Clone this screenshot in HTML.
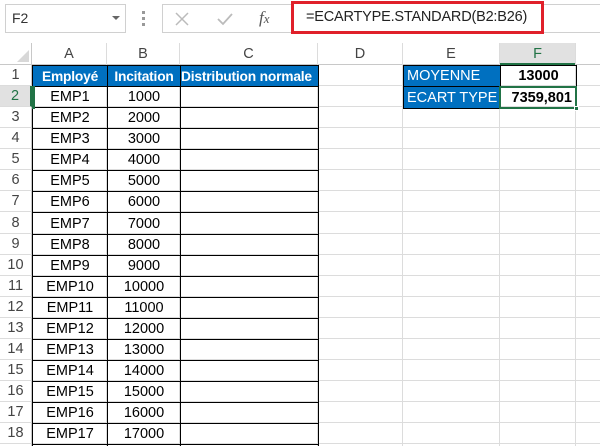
<!DOCTYPE html>
<html style="overflow:hidden;height:446px"><head><meta charset="utf-8"><style>
body{margin:0;width:600px;height:446px;overflow:hidden;background:#fff;font-family:"Liberation Sans",sans-serif;position:relative}
.a{position:absolute;box-sizing:border-box}
.c{position:absolute;box-sizing:border-box;text-align:center;font-size:14.5px;color:#000;display:flex;align-items:center;justify-content:center;white-space:nowrap;overflow:hidden}
.hb{font-size:13.8px!important;letter-spacing:-0.2px}
</style></head><body>
<div class="a" style="left:0;top:0;width:600px;height:37px;background:#fff"></div>
<div class="a" style="left:5px;top:4px;width:121px;height:29px;border:1px solid #d0d0d0"></div>
<div class="a" style="left:12px;top:10px;font-size:14px;color:#333">F2</div>
<div class="a" style="left:112px;top:16px;width:0;height:0;border-left:4px solid transparent;border-right:4px solid transparent;border-top:4px solid #666"></div>
<div class="a" style="left:142px;top:11px;width:3px;height:3px;background:#999"></div>
<div class="a" style="left:142px;top:17px;width:3px;height:3px;background:#999"></div>
<div class="a" style="left:142px;top:23px;width:3px;height:3px;background:#999"></div>
<div class="a" style="left:162px;top:4px;width:440px;height:29px;border:1px solid #d0d0d0"></div>
<svg class="a" style="left:174px;top:11px" width="16" height="16"><path d="M2 2L14 14M14 2L2 14" stroke="#bbb" stroke-width="1.5"/></svg>
<svg class="a" style="left:216px;top:11px" width="18" height="16"><path d="M2 8L7 13L16 3" stroke="#bbb" stroke-width="1.8" fill="none"/></svg>
<div class="a" style="left:259px;top:8px;font-family:'Liberation Serif',serif;font-style:italic;font-size:17px;color:#555">f<span style="font-size:13px">x</span></div>
<div class="a" style="left:291px;top:1px;width:253px;height:33px;border:3px solid #e0202a;background:#fff"></div>
<div class="a" style="left:306px;top:9px;font-size:14.5px;letter-spacing:-0.2px;color:#222">=ECARTYPE.STANDARD(B2:B26)</div>
<div class="a" style="left:0;top:43px;width:600px;height:22px;background:#fff;border-bottom:1px solid #c8c8c8"></div>
<div class="a" style="left:0;top:43px;width:32px;height:403px;border-right:1px solid #c8c8c8"></div>
<svg class="a" style="left:16px;top:49px" width="14" height="14"><path d="M13 1L13 13L1 13Z" fill="#d8d8d8"/></svg>
<div class="a" style="left:500px;top:43px;width:76px;height:22px;background:#e1e1e1;border-bottom:2px solid #217346"></div>
<div class="c" style="left:32px;top:43px;width:75px;height:22px;color:#444;border-right:1px solid #dcdcdc">A</div>
<div class="c" style="left:107px;top:43px;width:73px;height:22px;color:#444;border-right:1px solid #dcdcdc">B</div>
<div class="c" style="left:180px;top:43px;width:138px;height:22px;color:#444;border-right:1px solid #dcdcdc">C</div>
<div class="c" style="left:318px;top:43px;width:85px;height:22px;color:#444;border-right:1px solid #dcdcdc">D</div>
<div class="c" style="left:403px;top:43px;width:97px;height:22px;color:#444;border-right:1px solid #dcdcdc">E</div>
<div class="c" style="left:500px;top:43px;width:76px;height:22px;color:#217346;border-right:1px solid #dcdcdc">F</div>
<div id="g"></div>
<script>
var h='';var top0=65,rh=21.07;
var cols=[32,107,180,318,403,500,576,650];
for(var n=1;n<=19;n++){var t=top0+(n-1)*rh;
 h+='<div class="a" style="left:32px;top:'+(t+rh-1)+'px;width:568px;height:1px;background:#dcdcdc"></div>';
 var bg=n==2?'#e1e1e1':'#fff';var col=n==2?'#217346':'#444';
 h+='<div class="c" style="left:0;top:'+t+'px;width:32px;height:'+rh+'px;background:'+bg+';color:'+col+';border-bottom:1px solid #dcdcdc;'+(n==2?'border-right:2px solid #217346;':'border-right:1px solid #c8c8c8;')+'">'+n+'</div>';}
for(var i=1;i<cols.length;i++)h+='<div class="a" style="left:'+(cols[i]-1)+'px;top:65px;width:1px;height:381px;background:#dcdcdc"></div>';
var B='border:1px solid #000;';
h+='<div class="c hb" style="left:32px;top:65px;width:76px;height:22px;background:#0070c0;color:#fff;font-weight:bold;'+B+'">Employé</div>';
h+='<div class="c hb" style="left:107px;top:65px;width:74px;height:22px;background:#0070c0;color:#fff;font-weight:bold;'+B+'">Incitation</div>';
h+='<div class="c hb" style="left:180px;top:65px;width:139px;height:22px;background:#0070c0;color:#fff;font-weight:bold;justify-content:flex-start;'+B+'">Distribution normale</div>';
for(var n=2;n<=19;n++){var t=top0+(n-1)*rh;
 h+='<div class="c" style="left:32px;top:'+t+'px;width:76px;height:'+(rh+1)+'px;'+B+'">EMP'+(n-1)+'</div>';
 h+='<div class="c" style="left:107px;top:'+t+'px;width:74px;height:'+(rh+1)+'px;'+B+'">'+((n-1)*1000)+'</div>';
 h+='<div class="c" style="left:180px;top:'+t+'px;width:139px;height:'+(rh+1)+'px;'+B+'"></div>';}
h+='<div class="a" style="left:32px;top:86px;width:3px;height:23px;background:#217346"></div>';
h+='<div class="c" style="left:403px;top:65px;width:98px;height:22px;background:#0070c0;color:#fff;justify-content:flex-start;padding-left:3px;'+B+'">MOYENNE</div>';
h+='<div class="c" style="left:500px;top:65px;width:77px;height:22px;font-weight:bold;'+B+'">13000</div>';
h+='<div class="c" style="left:403px;top:86px;width:98px;height:23px;background:#0070c0;color:#fff;justify-content:flex-start;padding-left:3px;'+B+'">ECART TYPE</div>';
h+='<div class="c" style="left:499px;top:86px;width:78px;height:23px;font-weight:bold;justify-content:flex-end;padding-right:3px;border:2px solid #217346">7359,801</div>';
h+='<div class="a" style="left:574px;top:106px;width:5px;height:5px;background:#217346;border:1px solid #fff"></div>';
document.getElementById('g').innerHTML=h;
</script>
</body></html>
